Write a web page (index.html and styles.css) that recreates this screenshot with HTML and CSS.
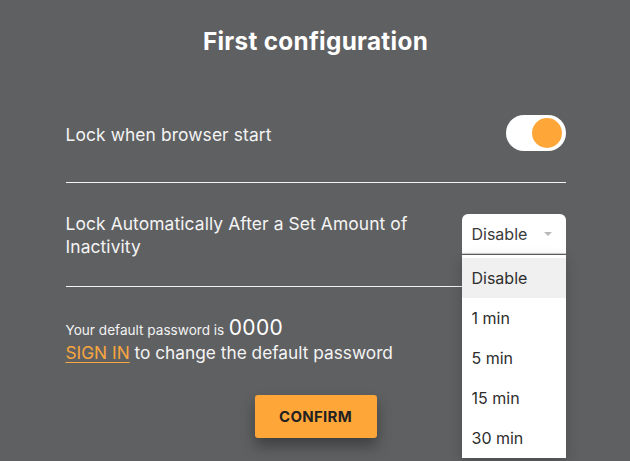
FILE: index.html
```html
<!DOCTYPE html>
<html lang="en">
<head>
<meta charset="utf-8">
<title>First configuration</title>
<link rel="stylesheet" href="styles.css">
</head>
<body>
<main class="page">
  <h1 class="title">First configuration</h1>
  <section class="row row-first">
    <span class="label">Lock when browser start</span>
    <span class="toggle"><span class="knob"></span></span>
  </section>
  <section class="row row-second">
    <span class="label label-wrap">Lock Automatically After a Set Amount of Inactivity</span>
    <div class="select-wrap">
      <div class="select">
        <span>Disable</span>
        <span class="caret"></span>
      </div>
      <ul class="menu">
        <li class="item active">Disable</li>
        <li class="item">1 min</li>
        <li class="item">5 min</li>
        <li class="item">15 min</li>
        <li class="item">30 min</li>
      </ul>
    </div>
  </section>
  <section class="info">
    <p class="pw"><span class="small">Your default password is</span> <span class="code">0000</span></p>
    <p class="sign"><a class="link" href="#">SIGN IN</a> to change the default password</p>
  </section>
  <div class="actions">
    <button class="confirm">CONFIRM</button>
  </div>
</main>
</body>
</html>
```
FILE: styles.css
```css
html, body {
  margin: 0;
  padding: 0;
  background: #5f6062;
  height: 100%;
  overflow: hidden;
}
body {
  font-family: Inter, "Noto Sans", sans-serif;
  color: #ffffff;
}
.page {
  width: 500px;
  margin: 0 auto;
  padding: 0 0 0 1px;
}
.title {
  margin: 0;
  padding-top: 26px;
  height: 56px;
  box-sizing: border-box;
  font-size: 24.3px;
  font-weight: 700;
  text-align: center;
  letter-spacing: 0.3px;
  line-height: 30px;
}
.row {
  display: flex;
  justify-content: space-between;
  border-bottom: 1px solid #f2f2f2;
}
.row-first {
  margin-top: 59px;
  height: 67px;
  align-items: flex-start;
}
.row-first .label {
  margin-top: 8px;
}
.label {
  font-size: 17.4px;
  line-height: 23px;
  color: #f4f4f4;
  letter-spacing: 0.1px;
}
.label-wrap {
  width: 370px;
}
.toggle {
  width: 60px;
  height: 36px;
  border-radius: 18px;
  background: #ffffff;
  display: flex;
  align-items: center;
  justify-content: flex-end;
  padding-right: 4px;
  box-sizing: border-box;
}
.knob {
  width: 30px;
  height: 30px;
  border-radius: 50%;
  background: #ffa638;
}
.row-second {
  margin-top: 0;
  height: 104px;
  padding-top: 29px;
  box-sizing: border-box;
  align-items: flex-start;
}
.select-wrap {
  position: relative;
  width: 104px;
  margin-top: 2px;
}
.select {
  height: 40px;
  background: #ffffff;
  border-radius: 6px 6px 0 0;
  border-bottom: 1px solid #cfcfcf;
  box-sizing: border-box;
  display: flex;
  align-items: center;
  justify-content: space-between;
  padding: 0 14px 0 10px;
  color: #3a3a3a;
  font-size: 16px;
}
.caret {
  width: 0;
  height: 0;
  border-left: 4px solid transparent;
  border-right: 4px solid transparent;
  border-top: 4px solid #b8b8b8;
}
.menu {
  position: absolute;
  left: 0;
  top: 41px;
  width: 104px;
  margin: 0;
  padding: 3px 0 0;
  list-style: none;
  background: #ffffff;
  box-shadow: 0 4px 12px rgba(0,0,0,0.2);
  z-index: 2;
}
.item {
  height: 40px;
  line-height: 40px;
  padding-left: 10px;
  font-size: 16px;
  color: #2e2e2e;
}
.item.active {
  background: #f0f0f0;
}
.info {
  margin-top: 30px;
}
.info p {
  margin: 0;
}
.pw {
  line-height: 22px;
}
.small {
  font-size: 13.6px;
  color: #f2f2f2;
}
.code {
  font-size: 21px;
  letter-spacing: 0.3px;
}
.sign {
  font-size: 17.3px;
  line-height: 23px;
  color: #f4f4f4;
  letter-spacing: 0;
}
.link {
  color: #f8a640;
  text-decoration: underline;
  text-underline-offset: 3px;
}
.actions {
  display: flex;
  justify-content: center;
  margin-top: 31px;
}
.confirm {
  width: 122px;
  height: 43px;
  border: none;
  border-radius: 3px;
  background: #ffa638;
  color: #222;
  font-family: Inter, sans-serif;
  font-weight: 700;
  font-size: 15px;
  letter-spacing: 0.3px;
  box-shadow: 0 8px 14px rgba(0,0,0,0.35);
}
```
